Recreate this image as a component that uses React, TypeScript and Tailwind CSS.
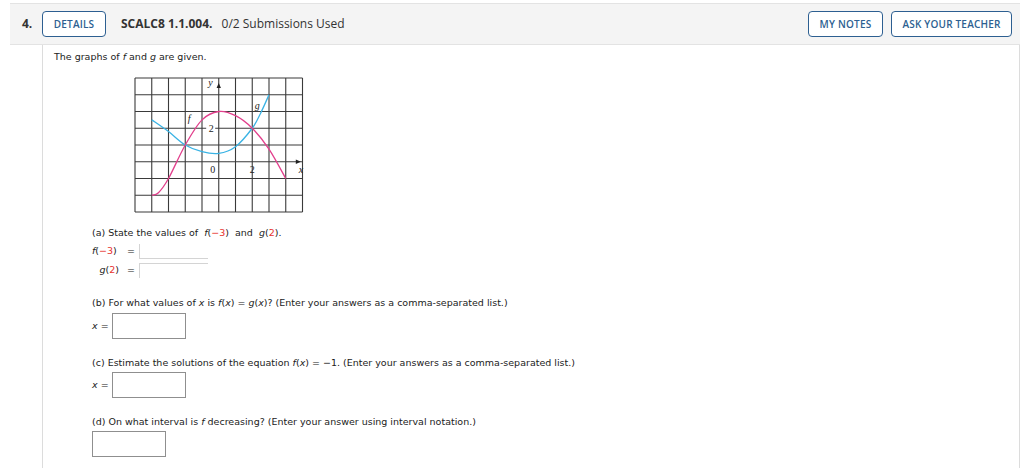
import React from 'react'

const S = 16.75
const X = (x: number) => 1 + (x + 5) * S
const Y = (y: number) => 1 + (5 - y) * S

const spline = (pts: number[][]) => {
  const p = pts.map(([x, y]) => [X(x), Y(y)])
  let d = `M${p[0][0]} ${p[0][1]}`
  for (let i = 0; i < p.length - 1; i++) {
    const p0 = p[i - 1] || p[i]
    const p1 = p[i]
    const p2 = p[i + 1]
    const p3 = p[i + 2] || p2
    const c1 = [p1[0] + (p2[0] - p0[0]) / 6, p1[1] + (p2[1] - p0[1]) / 6]
    const c2 = [p2[0] - (p3[0] - p1[0]) / 6, p2[1] - (p3[1] - p1[1]) / 6]
    d += ` C${c1[0]} ${c1[1]} ${c2[0]} ${c2[1]} ${p2[0]} ${p2[1]}`
  }
  return d
}

const fPts = [[-4, -2], [-3.6, -1.85], [-3, -1], [-2, 1], [-1, 2.5], [0, 3], [1, 2.75], [2, 2], [3, 0.75], [4, -1]]
const gPts = [[-4, 2.5], [-3, 1.8], [-2, 1], [-1, 0.6], [0, 0.5], [1, 0.9], [2, 2], [2.5, 2.9], [3, 4]]

const Graph = () => (
  <svg width="170" height="137" viewBox="0 0 170 137" className="block">
    {Array.from({ length: 11 }, (_, i) => (
      <line key={'v' + i} x1={1 + i * S} y1={1} x2={1 + i * S} y2={1 + 8 * S} stroke="#3a3a3a" strokeWidth="1.1" />
    ))}
    {Array.from({ length: 9 }, (_, i) => (
      <line key={'h' + i} x1={1} y1={1 + i * S} x2={1 + 10 * S} y2={1 + i * S} stroke="#3a3a3a" strokeWidth="1.1" />
    ))}
    <path d={`M${X(0)} ${Y(4.7)} l-2.2 5 h4.4 z`} fill="#222" />
    <path d={`M${X(4.9)} ${Y(0)} l-5 -2.2 v4.4 z`} fill="#222" />
    <rect x={X(-0.75)} y={Y(2) - 5} width="9" height="10" fill="white" />
    <rect x={X(-0.62)} y={Y(0) + 3} width="8" height="11" fill="white" />
    <path d={spline(gPts)} fill="none" stroke="#3ab3e4" strokeWidth="1.3" />
    <path d={spline(fPts)} fill="none" stroke="#e23f8c" strokeWidth="1.3" />
    <g fontFamily="'Liberation Serif', serif" fontSize="10" fill="#222">
      <text x={X(-0.6)} y={Y(2) + 3.5}>2</text>
      <text x={X(0) - 8.5} y={Y(0) + 11.5}>0</text>
      <text x={X(2) - 2.5} y={Y(0) + 11.5}>2</text>
      <text x={X(4.78)} y={Y(0) + 11} fontStyle="italic">x</text>
      <text x={X(-0.62)} y={8.5} fontStyle="italic">y</text>
      <text x={X(-1.85)} y={Y(2.55) + 3} fontStyle="italic">f</text>
      <text x={X(2.15)} y={Y(3.35) + 3} fontStyle="italic">g</text>
    </g>
  </svg>
)

const Red = ({ children }: { children: React.ReactNode }) => <span className="text-[#e8322e]">{children}</span>

const Btn = ({ children, w }: { children: React.ReactNode; w: string }) => (
  <button className={`${w} h-[26px] rounded-[4px] border-[1.5px] border-[#2d5f91] bg-white text-[10px] font-semibold text-[#2d5f91] tracking-[0.2px]`}>
    {children}
  </button>
)

export default function App() {
  return (
    <div className="w-[1024px] h-[468px] bg-white overflow-hidden pt-[3px] pl-[10px]" style={{ fontFamily: "'Open Sans', sans-serif" }}>
      <div className="w-[1010px]">
        <div className="h-[42px] bg-[#f4f4f4] border-t border-b border-[#e3e3e3] flex items-center">
          <span className="w-[32px] pl-[12px] text-[12px] font-bold text-[#333]">4.</span>
          <Btn w="w-[64px]">DETAILS</Btn>
          <span className="ml-[15px] text-[12px] font-bold text-[#333]">SCALC8 1.1.004.</span>
          <span className="ml-[9px] text-[12px] text-[#333]">0/2 Submissions Used</span>
          <div className="ml-auto flex gap-[8px] mr-[8px]">
            <Btn w="w-[75px]">MY NOTES</Btn>
            <Btn w="w-[121px]">ASK YOUR TEACHER</Btn>
          </div>
        </div>
        <div
          className="ml-[32px] h-[430px] border-l border-r border-[#dcdcdc] text-[9.5px] text-[#222]"
          style={{ fontFamily: "'DejaVu Sans', Verdana, sans-serif" }}
        >
          <p className="pt-[6px] pl-[11px] leading-[12px]">
            The graphs of <i>f</i> and <i>g</i> are given.
          </p>
          <div className="mt-[14px] ml-[91px]">
            <Graph />
          </div>
          <div className="pl-[49px]">
            <p className="mt-[12px] leading-[14px]">
              (a) State the values of&nbsp; <i>f</i>(<Red>−3</Red>)&nbsp; and&nbsp; <i>g</i>(<Red>2</Red>).
            </p>
            <div className="mt-[4px] flex items-center h-[15px]">
              <span className="w-[47px] flex justify-between pr-[4px]">
                <span><i>f</i>(<Red>−3</Red>)</span>
                <span>=</span>
              </span>
              <div className="w-[69px] h-[15px] border-l border-b border-[#d4d4d4]" />
            </div>
            <div className="mt-[4px] flex items-center h-[15px]">
              <span className="w-[47px] flex justify-end gap-[8px] pr-[4px]">
                <span><i>g</i>(<Red>2</Red>)</span>
                <span>=</span>
              </span>
              <div className="w-[69px] h-[15px] border-l border-t border-[#d4d4d4]" />
            </div>
            <p className="mt-[18px] leading-[14px]">
              (b) For what values of <i>x</i> is <i>f</i>(<i>x</i>) = <i>g</i>(<i>x</i>)? (Enter your answers as a comma-separated list.)
            </p>
            <div className="mt-[3px] flex items-center">
              <span className="w-[20px]"><i>x</i> =</span>
              <div className="w-[74px] h-[26px] border border-[#8f8f8f]" />
            </div>
            <p className="mt-[17px] leading-[14px]">
              (c) Estimate the solutions of the equation <i>f</i>(<i>x</i>) = −1. (Enter your answers as a comma-separated list.)
            </p>
            <div className="mt-[2px] flex items-center">
              <span className="w-[20px]"><i>x</i> =</span>
              <div className="w-[74px] h-[26px] border border-[#8f8f8f]" />
            </div>
            <p className="mt-[17px] leading-[14px]">
              (d) On what interval is <i>f</i> decreasing? (Enter your answer using interval notation.)
            </p>
            <div className="mt-[2px] w-[74px] h-[26px] border border-[#8f8f8f]" />
          </div>
        </div>
      </div>
    </div>
  )
}
